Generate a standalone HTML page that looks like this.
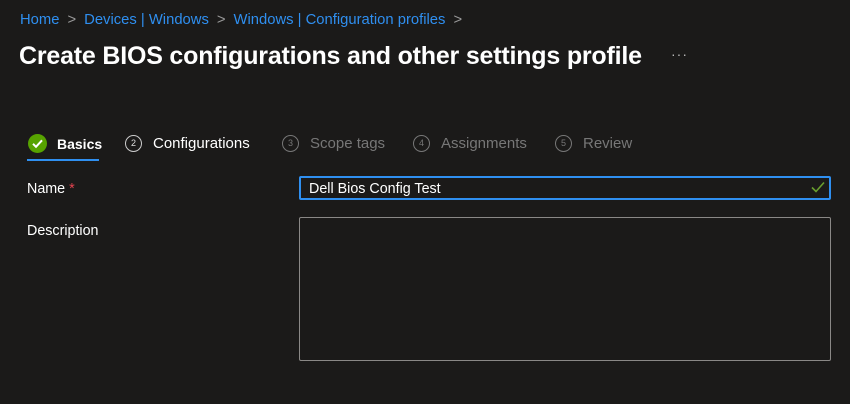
<!DOCTYPE html>
<html><head><meta charset="utf-8"><style>
html,body{margin:0;padding:0}
body{width:850px;height:404px;background:#1b1a19;position:relative;overflow:hidden;font-family:"Liberation Sans",sans-serif;color:#fff}
.a{position:absolute;white-space:nowrap}
.bc{top:12px;left:20px;font-size:14.8px;color:#2f8ff0}
.bc span{color:#9a9a9a;margin:0 8px}
.title{top:42px;left:19px;font-size:25px;font-weight:bold;letter-spacing:-.2px}
.dots{top:46px;left:671px;color:#bbb;font-size:14px;letter-spacing:1px}
.tab{top:135px;font-size:15px}
.num{position:absolute;width:15px;height:15px;border:1px solid #ccc;border-radius:50%;font-size:9px;text-align:center;line-height:15px;top:135px}
.lbl{font-size:14.3px}
</style></head><body>
<div class="a bc">Home<span>&gt;</span>Devices | Windows<span>&gt;</span>Windows | Configuration profiles<span>&gt;</span></div>
<div class="a title">Create BIOS configurations and other settings profile</div>
<div class="a dots">···</div>

<svg class="a" style="left:28px;top:134px" width="19" height="19" viewBox="0 0 19 19"><circle cx="9.5" cy="9.5" r="9.5" fill="#57a300"/><path d="M5 9.8l3 3 6-6.5" stroke="#fff" stroke-width="2" fill="none"/></svg>
<div class="a tab" style="left:57px;font-weight:bold;color:#fff;font-size:14px;top:136px">Basics</div>
<div class="a" style="left:27px;top:159px;width:72px;height:2px;background:#2f8ff0"></div>

<div class="num" style="left:125px;color:#ddd;border-color:#ccc">2</div>
<div class="a tab" style="left:153px;color:#fff">Configurations</div>
<div class="num" style="left:282px;color:#777;border-color:#777">3</div>
<div class="a tab" style="left:310px;color:#777">Scope tags</div>
<div class="num" style="left:413px;color:#777;border-color:#777">4</div>
<div class="a tab" style="left:441px;color:#777">Assignments</div>
<div class="num" style="left:555px;color:#777;border-color:#777">5</div>
<div class="a tab" style="left:583px;color:#777">Review</div>

<div class="a lbl" style="left:27px;top:181px">Name <span style="color:#e3434f">*</span></div>
<div class="a" style="left:299px;top:176px;width:528px;height:20px;border:2px solid #2f8ff0;border-radius:2px"></div>
<div class="a lbl" style="left:309px;top:181px">Dell Bios Config Test</div>
<svg class="a" style="left:811px;top:181px" width="14" height="12" viewBox="0 0 14 12"><path d="M1 6.5l4 4L13 1.5" stroke="#6a9e2e" stroke-width="1.6" fill="none"/></svg>

<div class="a lbl" style="left:27px;top:223px">Description</div>
<div class="a" style="left:299px;top:217px;width:530px;height:142px;border:1px solid #8a8886;border-radius:2px"></div>
</body></html>
